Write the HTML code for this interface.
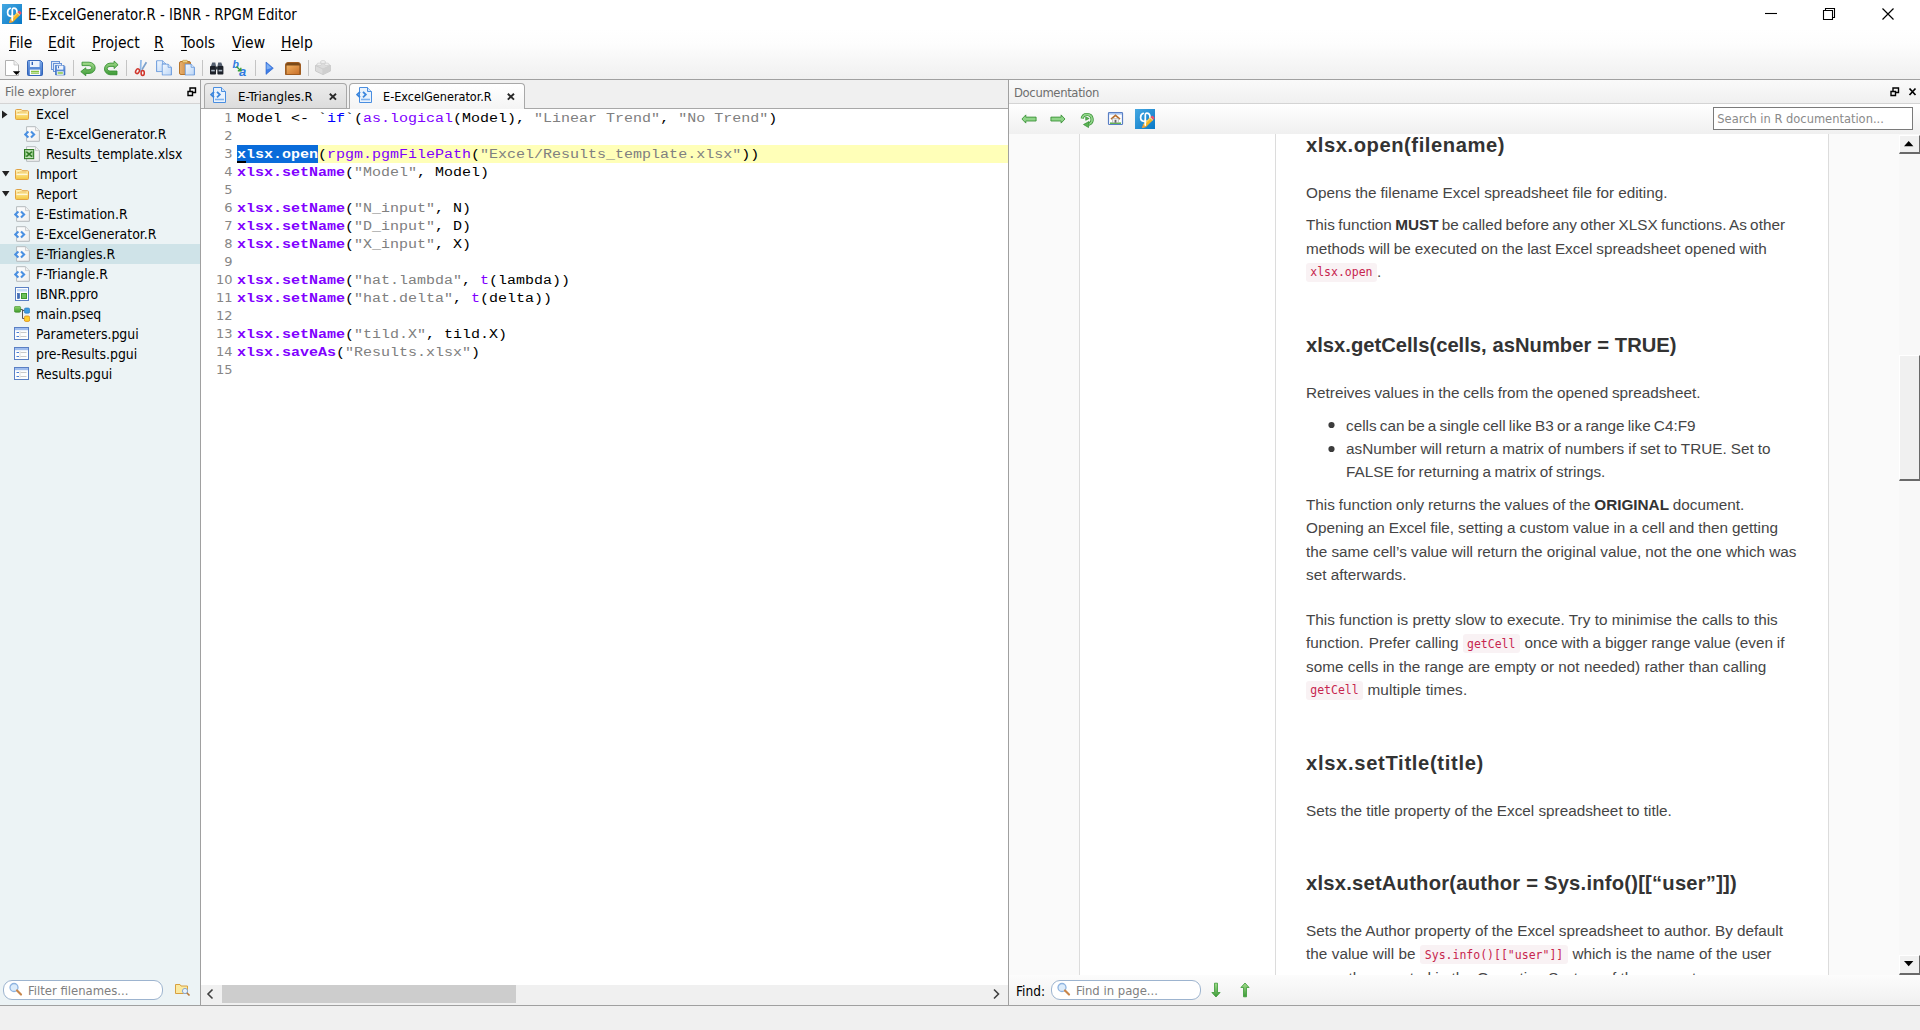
<!DOCTYPE html>
<html><head><meta charset="utf-8"><title>E-ExcelGenerator.R - IBNR - RPGM Editor</title>
<style>
*{box-sizing:border-box;margin:0;padding:0}
html,body{width:1920px;height:1030px;overflow:hidden;background:#f0f0f0;font-family:"DejaVu Sans Condensed","Liberation Sans",sans-serif;color:#000}
.abs{position:absolute}
#titlebar{left:0;top:0;width:1920px;height:29px;background:#fff}
#title{left:27.6px;top:5px;transform:scaleX(0.9);transform-origin:0 0;font:16.4px/20px "DejaVu Sans Condensed","Liberation Sans",sans-serif;white-space:nowrap}
#chrome{left:0;top:29px;width:1920px;height:50px;background:linear-gradient(#fff,#fdfdfd 30%,#f0f0f0)}
#menubar span{position:absolute;top:33px;font:15.5px/20px "DejaVu Sans Condensed","Liberation Sans",sans-serif;white-space:nowrap}
#menubar u{text-decoration-thickness:1px;text-underline-offset:2px}
#topline{left:0;top:79px;width:1920px;height:1px;background:#a0a0a0}
/* left panel */
#left{left:0;top:80px;width:200px;height:925px;background:#ecf3f5}
#lefthead{left:0;top:0;width:200px;height:24px;background:linear-gradient(#fafafa,#f0f0f0);border-bottom:1px solid #d4d4d4}
#lefthead span{position:absolute;left:5px;top:3px;font:12.9px/18px "DejaVu Sans Condensed","Liberation Sans",sans-serif;color:#6e6e6e}
.row{position:absolute;left:0;width:200px;height:20px;font:13.9px/20px "DejaVu Sans Condensed","Liberation Sans",sans-serif;white-space:nowrap}
.row span{position:absolute;top:0}
.sel{background:#cfe3e8}
#vsep1{left:200px;top:80px;width:1px;height:925px;background:#a0a0a0}
/* editor */
#editor{left:201px;top:80px;width:807px;height:925px;background:#f0f0f0}
#code{left:0;top:29px;width:807px;height:876px;background:#fff}
.ln{position:absolute;left:0;width:807px;height:18px;white-space:pre}
.ln i{position:absolute;left:0;top:0;width:31.5px;text-align:right;font-style:normal;color:#868686;font:13px/18px "DejaVu Sans","Liberation Sans",sans-serif;letter-spacing:0}
.ln b{position:absolute;left:36px;top:1px;font:normal 12.5px/18px "Liberation Mono",monospace;transform:scaleX(1.2);transform-origin:0 0}
.f{color:#8000ff;font-weight:bold}.g{color:#8000ff}.s{color:#808080}.k{color:#0000ff}
#vsep2{left:1008px;top:80px;width:1px;height:925px;background:#a0a0a0}
/* doc */
#doc{left:1009px;top:80px;width:911px;height:925px;background:#f0f0f0}
#bottomline{left:0;top:1005px;width:1920px;height:1px;background:#a0a0a0}
.tab{top:3px;border:1px solid #a8a8a8;border-radius:4px 4px 0 0;font:12.55px/20px "DejaVu Sans Condensed","Liberation Sans",sans-serif;white-space:nowrap}
.tab span{position:absolute;top:3px}
.tab em{position:absolute;top:4px;font:normal 9px/18px "DejaVu Sans",sans-serif;color:#333}
.cur::before{content:"";position:absolute;left:36px;top:0;width:771px;height:18px;background:#ffffb8}
.selx{color:#fff;font-weight:bold}
.selbg{position:absolute;left:36px;top:0;width:81px;height:18px;background:#0a6cda}
.caret{position:absolute;left:36px;top:16px;width:9px;height:2px;background:#000}
#dochead{left:0;top:0;width:911px;height:24px;background:linear-gradient(#fafafa,#f0f0f0);border-bottom:1px solid #d4d4d4}
#dochead span{position:absolute;left:5px;top:3.6px;font:12.9px/18px "DejaVu Sans Condensed","Liberation Sans",sans-serif;color:#6e6e6e;letter-spacing:-0.34px}
#doctool{left:0;top:24px;width:911px;height:30px;background:linear-gradient(#ffffff,#f0f0f0)}
#docview{left:0;top:54px;width:911px;height:841px;overflow:hidden;background:#fafafa}
.dp,.dh{position:absolute;white-space:nowrap;font-family:"Liberation Sans",sans-serif;color:#454545}
.dp{font-size:15.3px;line-height:23px}
.dh{font-size:20.2px;line-height:30px;font-weight:bold;color:#333}
.dp strong{color:#333}
.dc{position:absolute;height:18.5px;background:#f9f2f4;border-radius:3px;text-align:center;white-space:nowrap}
.dc code{display:block;font:11.5px/18.5px "DejaVu Sans Mono","Liberation Mono",monospace;color:#c7254e;position:relative;top:0.3px}
.ui{font-family:"DejaVu Sans Condensed","Liberation Sans",sans-serif;white-space:nowrap}
.sbb{background:#f0f0f0;border-top:1px solid #fff;border-left:1px solid #fff;border-right:1px solid #696969;border-bottom:2px solid #696969}
</style></head><body>
<svg width="0" height="0" style="position:absolute"><defs>
<linearGradient id="gFold" x1="0" y1="0" x2="0" y2="1"><stop offset="0" stop-color="#fff6c8"/><stop offset="1" stop-color="#f5c73c"/></linearGradient>
<linearGradient id="gPage" x1="0" y1="0" x2="1" y2="1"><stop offset="0" stop-color="#ffffff"/><stop offset="1" stop-color="#eeeeee"/></linearGradient>
<linearGradient id="gBlue" x1="0" y1="0" x2="0" y2="1"><stop offset="0" stop-color="#7fb2ee"/><stop offset="1" stop-color="#2f6fc9"/></linearGradient>
<linearGradient id="gGreen" x1="0" y1="0" x2="0" y2="1"><stop offset="0" stop-color="#8fd46a"/><stop offset="1" stop-color="#3f9a2c"/></linearGradient>
<symbol id="folder" viewBox="0 0 14 11"><path d="M0.500 1.500 Q0.500 0.500 1.500 0.500 H6.300 L7.300 1.700 H12.500 Q13.500 1.700 13.500 2.700 V9.500 Q13.500 10.500 12.500 10.500 H1.500 Q0.500 10.500 0.500 9.500 Z" fill="url(#gFold)" stroke="#e0a244" stroke-width="1"/><path d="M2.500 3.600 H4 L4.600 3 H11.500" fill="none" stroke="#ecc060" stroke-width="1"/><path d="M1.500 5.400 H12.500" stroke="#ffffff" stroke-opacity="0.800" stroke-width="1"/></symbol>
<symbol id="rfile" viewBox="0 0 16 16"><path d="M2.600 0.700 H11.500 L15.400 4.600 V15.300 H2.600 Z" fill="url(#gPage)" stroke="#b4babd"/><path d="M11.500 0.700 V4.600 H15.400" fill="#f0f0f0" stroke="#c0c4c6" stroke-width="0.800"/><path d="M4.400 5.400 L1.300 8.500 L4.400 11.600 M7 5.400 L10.100 8.500 L7 11.600" fill="none" stroke="#4a90e2" stroke-width="2.100"/></symbol>
<symbol id="xfile" viewBox="0 0 16 16"><path d="M2.600 0.700 H11.500 L15.400 4.600 V15.300 H2.600 Z" fill="url(#gPage)" stroke="#b4babd"/><path d="M11.500 0.700 V4.600 H15.400" fill="#f0f0f0" stroke="#c0c4c6" stroke-width="0.800"/><rect x="0.500" y="3.500" width="9.200" height="9.200" fill="#58a848" stroke="#2f7a23"/><rect x="1.600" y="5" width="7" height="6.200" fill="#b4dca8"/><path d="M2.300 5.600 L8 10.600 M8 5.600 L2.300 10.600" stroke="#2f7a23" stroke-width="1.500"/><path d="M1 4.700 H9.200 M1 11.500 H9.200" stroke="#e8f4e4" stroke-width="0.700"/></symbol>
<symbol id="ppro" viewBox="0 0 14 14"><rect x="0.5" y="0.5" width="13" height="13" fill="#fbfdff" stroke="#5a7fc4"/><rect x="2" y="2" width="10" height="2.5" fill="#c5daf5"/><rect x="2.5" y="6.5" width="2" height="5" fill="#3d6fbd" stroke="#2d57a0" stroke-width="0.6"/><rect x="6.5" y="6.5" width="5" height="5" fill="#6cc05a" stroke="#3f9a2c"/></symbol>
<symbol id="pgui" viewBox="0 0 15 13"><rect x="0.5" y="0.5" width="14" height="12" fill="#fdfdfd" stroke="#5a7fc4"/><rect x="1" y="1" width="13" height="2.200" fill="#9fbdee"/><path d="M2.5 5.5 H5 M2.5 9.5 H5" stroke="#4a7fd4" stroke-width="1.2"/><path d="M6.5 5.5 H12.5 M6.5 9.5 H12.5" stroke="#c8c8c8" stroke-width="1.2"/><path d="M6 4 V11" stroke="#d8d8d8" stroke-width="0.8"/></symbol>
<symbol id="pseq" viewBox="0 0 16 16"><path d="M6 3.5 H8.5 V12.5 H10.5 M8.5 4.5 H10.5" fill="none" stroke="#555" stroke-width="1"/><rect x="0.3" y="0.3" width="6.4" height="6" rx="1.6" fill="url(#gGreen)" stroke="#3a8a28" stroke-width="0.6"/><rect x="10.3" y="2" width="5.4" height="5.2" rx="1.5" fill="#3c9be0" stroke="#1f6fb8" stroke-width="0.6"/><rect x="10.3" y="10" width="5.4" height="5.4" rx="1.5" fill="#ffd02a" stroke="#d98a1a" stroke-width="0.8"/></symbol>
<symbol id="tabicon" viewBox="0 0 17 16"><path d="M3.5 0.5 H11.5 L15.5 4.5 V15.5 H3.5 Z" fill="#eaf3fd" stroke="#4a8ee0"/><path d="M11.5 0.5 V4.5 H15.5" fill="#cfe3fa" stroke="#4a8ee0"/><path d="M4 4.8 L1.2 7.6 L4 10.4 M7 4.8 L9.8 7.6 L7 10.4" fill="none" stroke="#3b86dd" stroke-width="1.8"/><path d="M5 12.5 H14" stroke="#7fb2ee" stroke-width="1.6"/></symbol>
</defs></svg>
<div id="titlebar" class="abs"></div>
<div id="title" class="abs">E-ExcelGenerator.R - IBNR - RPGM Editor</div>
<div id="chrome" class="abs"></div>
<div id="menubar"><span style="left:9px"><u>F</u>ile</span><span style="left:48px"><u>E</u>dit</span><span style="left:92px"><u>P</u>roject</span><span style="left:154px"><u>R</u></span><span style="left:181px"><u>T</u>ools</span><span style="left:232px"><u>V</u>iew</span><span style="left:281px"><u>H</u>elp</span></div>
<div id="topline" class="abs"></div>
<div id="left" class="abs">
<div id="lefthead" class="abs"><span>File explorer</span></div>
<div class="row" style="top:24px"><svg class="abs" style="left:2px;top:6px" width="6" height="9"><path d="M0 0.5 L5.5 4.5 L0 8.5 Z" fill="#222"/></svg><svg class="abs" style="left:15px;top:5px" width="14" height="11"><use href="#folder"/></svg><span style="left:36px">Excel</span></div>
<div class="row" style="top:44px"><svg class="abs" style="left:24px;top:2px" width="16" height="16"><use href="#rfile"/></svg><span style="left:46px">E-ExcelGenerator.R</span></div>
<div class="row" style="top:64px"><svg class="abs" style="left:24px;top:2px" width="16" height="16"><use href="#xfile"/></svg><span style="left:46px">Results_template.xlsx</span></div>
<div class="row" style="top:84px"><svg class="abs" style="left:2px;top:7px" width="8" height="6"><path d="M0 0 H7.5 L3.75 5.5 Z" fill="#222"/></svg><svg class="abs" style="left:15px;top:5px" width="14" height="11"><use href="#folder"/></svg><span style="left:36px">Import</span></div>
<div class="row" style="top:104px"><svg class="abs" style="left:2px;top:7px" width="8" height="6"><path d="M0 0 H7.5 L3.75 5.5 Z" fill="#222"/></svg><svg class="abs" style="left:15px;top:5px" width="14" height="11"><use href="#folder"/></svg><span style="left:36px">Report</span></div>
<div class="row" style="top:124px"><svg class="abs" style="left:14px;top:2px" width="16" height="16"><use href="#rfile"/></svg><span style="left:36px">E-Estimation.R</span></div>
<div class="row" style="top:144px"><svg class="abs" style="left:14px;top:2px" width="16" height="16"><use href="#rfile"/></svg><span style="left:36px">E-ExcelGenerator.R</span></div>
<div class="row sel" style="top:164px"><svg class="abs" style="left:14px;top:2px" width="16" height="16"><use href="#rfile"/></svg><span style="left:36px">E-Triangles.R</span></div>
<div class="row" style="top:184px"><svg class="abs" style="left:14px;top:2px" width="16" height="16"><use href="#rfile"/></svg><span style="left:36px">F-Triangle.R</span></div>
<div class="row" style="top:204px"><svg class="abs" style="left:15px;top:3px" width="14" height="14"><use href="#ppro"/></svg><span style="left:36px">IBNR.ppro</span></div>
<div class="row" style="top:224px"><svg class="abs" style="left:14px;top:2px" width="16" height="16"><use href="#pseq"/></svg><span style="left:36px">main.pseq</span></div>
<div class="row" style="top:244px"><svg class="abs" style="left:14px;top:3px" width="15" height="13"><use href="#pgui"/></svg><span style="left:36px">Parameters.pgui</span></div>
<div class="row" style="top:264px"><svg class="abs" style="left:14px;top:3px" width="15" height="13"><use href="#pgui"/></svg><span style="left:36px">pre-Results.pgui</span></div>
<div class="row" style="top:284px"><svg class="abs" style="left:14px;top:3px" width="15" height="13"><use href="#pgui"/></svg><span style="left:36px">Results.pgui</span></div>
</div>
<div id="vsep1" class="abs"></div>
<div id="editor" class="abs">
<div class="abs" style="left:0;top:28px;width:807px;height:1px;background:#a8a8a8"></div>
<div class="abs tab" style="left:3px;width:143px;background:linear-gradient(#ececec,#dcdcdc);height:25px;border-bottom:none"><svg class="abs" style="left:5px;top:3px" width="17" height="16"><use href="#tabicon"/></svg><span style="left:33px;font-size:13.1px">E-Triangles.R</span><svg class="abs" style="left:124px;top:9px" width="8" height="8"><path d="M0.800 0.800 L7 6.600 M7 0.800 L0.800 6.600" stroke="#2a2a2a" stroke-width="1.900"/></svg></div>
<div class="abs tab" style="left:148px;width:176px;background:linear-gradient(#ffffff,#f4f4f4);height:26px;border-bottom:none"><svg class="abs" style="left:6px;top:3px" width="17" height="16"><use href="#tabicon"/></svg><span style="left:33px">E-ExcelGenerator.R</span><svg class="abs" style="left:157px;top:9px" width="8" height="8"><path d="M0.800 0.800 L7 6.600 M7 0.800 L0.800 6.600" stroke="#2a2a2a" stroke-width="1.900"/></svg></div>
<div id="code" class="abs">
<div class="ln" style="top:0px"><i>1</i><b>Model &lt;- `<span class="k">if</span>`(<span class="g">as.logical</span>(Model), <span class="s">"Linear Trend"</span>, <span class="s">"No Trend"</span>)</b></div>
<div class="ln" style="top:18px"><i>2</i><b></b></div>
<div class="ln cur" style="top:36px"><div class="selbg"></div><i>3</i><b><span class="selx">xlsx.open</span>(<span class="g">rpgm.pgmFilePath</span>(<span class="s">"Excel/Results_template.xlsx"</span>))</b><div class="caret"></div></div>
<div class="ln" style="top:54px"><i>4</i><b><span class="f">xlsx.setName</span>(<span class="s">"Model"</span>, Model)</b></div>
<div class="ln" style="top:72px"><i>5</i><b></b></div>
<div class="ln" style="top:90px"><i>6</i><b><span class="f">xlsx.setName</span>(<span class="s">"N_input"</span>, N)</b></div>
<div class="ln" style="top:108px"><i>7</i><b><span class="f">xlsx.setName</span>(<span class="s">"D_input"</span>, D)</b></div>
<div class="ln" style="top:126px"><i>8</i><b><span class="f">xlsx.setName</span>(<span class="s">"X_input"</span>, X)</b></div>
<div class="ln" style="top:144px"><i>9</i><b></b></div>
<div class="ln" style="top:162px"><i>10</i><b><span class="f">xlsx.setName</span>(<span class="s">"hat.lambda"</span>, <span class="g">t</span>(lambda))</b></div>
<div class="ln" style="top:180px"><i>11</i><b><span class="f">xlsx.setName</span>(<span class="s">"hat.delta"</span>, <span class="g">t</span>(delta))</b></div>
<div class="ln" style="top:198px"><i>12</i><b></b></div>
<div class="ln" style="top:216px"><i>13</i><b><span class="f">xlsx.setName</span>(<span class="s">"tild.X"</span>, tild.X)</b></div>
<div class="ln" style="top:234px"><i>14</i><b><span class="f">xlsx.saveAs</span>(<span class="s">"Results.xlsx"</span>)</b></div>
<div class="ln" style="top:252px"><i>15</i><b></b></div>
</div>
</div>
<div id="vsep2" class="abs"></div>
<div id="doc" class="abs">
<div id="dochead" class="abs"><span>Documentation</span></div>
<div id="doctool" class="abs"></div>
<div id="docview" class="abs">
<div class="abs" style="left:0;top:0;width:890px;height:841px;background:#fafafa"></div>
<div class="abs" style="left:70px;top:0;width:750px;height:841px;background:#fff;border-left:1px solid #dcdcdc;border-right:1px solid #dcdcdc"></div>
<div class="abs" style="left:266px;top:0;width:1px;height:841px;background:#dcdcdc"></div>
<div class="dh" style="left:297.00px;top:-4px;letter-spacing:0.553px">xlsx.open(filename)</div>
<div class="dp" style="left:297.00px;top:46.50px;word-spacing:-0.105px">Opens the filename Excel spreadsheet file for editing.</div>
<div class="dp" style="left:297.00px;top:79.40px;word-spacing:-0.903px">This function <strong>MUST</strong> be called before any other XLSX functions. As other</div>
<div class="dp" style="left:297.00px;top:102.70px;word-spacing:-0.275px">methods will be executed on the last Excel spreadsheet opened with</div>
<div class="dc" style="left:296.70px;top:129.00px;width:71.40px"><code>xlsx.open</code></div>
<div class="dp" style="left:367.90px;top:125.80px">.</div>
<div class="dh" style="left:297.00px;top:196px;word-spacing:0.271px">xlsx.getCells(cells, asNumber = TRUE)</div>
<div class="dp" style="left:297.00px;top:246.80px;word-spacing:-0.444px">Retreives values in the cells from the opened spreadsheet.</div>
<div class="dp" style="left:337.00px;top:279.60px;word-spacing:-1.060px">cells can be a single cell like B3 or a range like C4:F9</div>
<div class="dp" style="left:337.00px;top:302.85px;word-spacing:-0.236px">asNumber will return a matrix of numbers if set to TRUE. Set to</div>
<div class="dp" style="left:337.00px;top:326.10px;word-spacing:-0.710px">FALSE for returning a matrix of strings.</div>
<div class="dp" style="left:297.00px;top:359.10px;word-spacing:-0.427px">This function only returns the values of the <strong>ORIGINAL</strong> document.</div>
<div class="dp" style="left:297.00px;top:382.35px;word-spacing:-0.258px">Opening an Excel file, setting a custom value in a cell and then getting</div>
<div class="dp" style="left:297.00px;top:405.60px;word-spacing:-0.053px">the same cell’s value will return the original value, not the one which was</div>
<div class="dp" style="left:297.00px;top:428.85px;word-spacing:0.172px">set afterwards.</div>
<div class="dp" style="left:297.00px;top:474.00px;word-spacing:0.055px">This function is pretty slow to execute. Try to minimise the calls to this</div>
<div class="dp" style="left:297.00px;top:497.20px;word-spacing:0.620px">function. Prefer calling</div>
<div class="dc" style="left:453.60px;top:500.40px;width:57.30px"><code>getCell</code></div>
<div class="dp" style="left:515.50px;top:497.20px;word-spacing:-0.409px">once with a bigger range value (even if</div>
<div class="dp" style="left:297.00px;top:520.60px;word-spacing:0.086px">some cells in the range are empty or not needed) rather than calling</div>
<div class="dc" style="left:296.90px;top:547.10px;width:57.10px"><code>getCell</code></div>
<div class="dp" style="left:358.40px;top:543.90px;letter-spacing:0.143px">multiple times.</div>
<div class="dh" style="left:297.00px;top:614px;letter-spacing:0.673px">xlsx.setTitle(title)</div>
<div class="dp" style="left:297.00px;top:664.90px;word-spacing:-0.076px">Sets the title property of the Excel spreadsheet to title.</div>
<div class="dh" style="left:297.00px;top:734px;letter-spacing:0.218px">xlsx.setAuthor(author = Sys.info()[[“user”]])</div>
<div class="dp" style="left:297.00px;top:784.90px;word-spacing:-0.082px">Sets the Author property of the Excel spreadsheet to author. By default</div>
<div class="dp" style="left:297.00px;top:808.10px;word-spacing:0.252px">the value will be</div>
<div class="dc" style="left:411.20px;top:811.30px;width:147.70px"><code>Sys.info()[["user"]]</code></div>
<div class="dp" style="left:563.40px;top:808.10px;word-spacing:0.007px">which is the name of the user</div>
<div class="dp" style="left:297.00px;top:832.40px">name the reported in the Operating System of the computer.</div>
<svg class="abs" style="left:318px;top:286.30px" width="10" height="10"><circle cx="4.500" cy="5" r="3.100" fill="#3c3c3c"/></svg>
<svg class="abs" style="left:318px;top:309.55px" width="10" height="10"><circle cx="4.500" cy="5" r="3.100" fill="#3c3c3c"/></svg>
</div>
</div>
<div id="bottomline" class="abs"></div>
<svg width="0" height="0" style="position:absolute"><defs>
<linearGradient id="gApp" x1="0" y1="0" x2="1" y2="1"><stop offset="0" stop-color="#45a8e2"/><stop offset="1" stop-color="#0878c6"/></linearGradient>
<linearGradient id="gGrn" x1="0" y1="0" x2="0" y2="1"><stop offset="0" stop-color="#a4dc8c"/><stop offset="1" stop-color="#3c9a36"/></linearGradient>
<linearGradient id="gFlop" x1="0" y1="0" x2="0" y2="1"><stop offset="0" stop-color="#7aa7e6"/><stop offset="1" stop-color="#3a6fc8"/></linearGradient>
<linearGradient id="gPg" x1="0" y1="0" x2="1" y2="1"><stop offset="0" stop-color="#f4f9ff"/><stop offset="1" stop-color="#bcd6f6"/></linearGradient>
<linearGradient id="gBox" x1="0" y1="0" x2="1" y2="1"><stop offset="0" stop-color="#f0b060"/><stop offset="1" stop-color="#c9702a"/></linearGradient>
<linearGradient id="gClip" x1="0" y1="0" x2="1" y2="0"><stop offset="0" stop-color="#e8b070"/><stop offset="1" stop-color="#c88030"/></linearGradient>
<symbol id="appicon" viewBox="0 0 20 20"><rect width="20" height="20" fill="url(#gApp)"/>
<path d="M8.300 4.300 Q5.600 5.200 5.600 8.600 Q5.600 12.600 10.300 12.600 Q15 12.600 15 8.200 Q15 4.200 11.600 4.200 Q10.300 4.200 10.300 6 V16.400" fill="none" stroke="#fff" stroke-width="1.700" stroke-linecap="round"/>
<path d="M7 19 L8.300 15.200 L15.600 8 L18.300 10.700 L11 17.900 Z" fill="#f2b424"/><path d="M8.300 15.200 L15.600 8 L16.500 8.900 L9.200 16.100 Z" fill="#f8d060"/><path d="M7 19 L8.300 15.200 L11 17.900 Z" fill="#f0a040"/><path d="M15.600 8 L16.600 7 Q17.300 6.400 18 7.100 L19.200 8.300 Q19.800 9 19.300 9.700 L18.300 10.700 Z" fill="#f0506a"/><path d="M15.100 8.500 L17.800 11.200" stroke="#f0e8e0" stroke-width="0.900"/>
<path d="M10.300 11 V16.200" stroke="#fff" stroke-width="1.600" stroke-linecap="round"/></symbol>
<symbol id="floppy" viewBox="0 0 16 16"><path d="M0.5 1.5 Q0.5 0.5 1.5 0.5 H13.5 L15.5 2.5 V14.5 Q15.5 15.5 14.5 15.5 H1.5 Q0.5 15.5 0.5 14.5 Z" fill="url(#gFlop)" stroke="#3465b8"/><rect x="3" y="1" width="9.5" height="6" fill="#eef4fd"/><rect x="4.6" y="1.8" width="1.4" height="3.2" fill="#3465b8"/><rect x="2.8" y="9.6" width="10.4" height="5.4" fill="#f8fbff"/><path d="M4 11.3 H12 M4 13.2 H12" stroke="#86c440" stroke-width="1.3"/></symbol>
<symbol id="page" viewBox="0 0 11 13"><path d="M0.5 0.5 H7 L10.5 4 V12.5 H0.5 Z" fill="url(#gPg)" stroke="#5a8fd8"/><path d="M7 0.5 V4 H10.5" fill="#e0ecfb" stroke="#5a8fd8" stroke-width="0.8"/></symbol>
</defs></svg>
<!-- title icon -->
<svg class="abs" style="left:2px;top:4px" width="20" height="20"><use href="#appicon"/></svg>
<!-- window controls -->
<svg class="abs" style="left:1760px;top:0" width="160" height="29"><path d="M5 13.5 H17" stroke="#000" stroke-width="1.1"/><path d="M63.5 10.5 H72.5 V19.5 H63.5 Z M65.5 10.5 V8.5 H74.5 V17.5 H72.5" fill="none" stroke="#000" stroke-width="1.1"/><path d="M122.5 8.5 L133.5 19.5 M133.5 8.5 L122.5 19.5" stroke="#000" stroke-width="1.2"/></svg>
<!-- main toolbar -->
<svg class="abs" style="left:0;top:57px" width="340" height="22" id="maintb">
<!-- new -->
<path d="M5.5 3.5 H14 L18.5 8 V18.5 H5.5 Z" fill="#fff" stroke="#b0b0b0"/><path d="M14 3.5 V8 H18.5" fill="#f0f0f0" stroke="#c0c0c0" stroke-width="0.8"/><path d="M12.8 14.2 H20.2 L16.5 18 Z" fill="#000"/>
<use href="#floppy" x="27" y="3" width="16" height="16"/>
<!-- save all -->
<g><rect x="51.500" y="4.500" width="8" height="8" fill="#dfeafa" stroke="#6a94d8"/><rect x="53.500" y="6.500" width="8" height="8" fill="#dfeafa" stroke="#6a94d8"/><use href="#floppy" x="55" y="8" width="10.500" height="10.500"/></g>
<path d="M73.500 3 V19 M126.500 3 V19 M202.500 3 V19 M255.500 3 V19 M308.500 3 V19" stroke="#c4c4c4"/>
<!-- undo -->
<path d="M82 5.2 H89 A6.2 5.65 0 0 1 89 16.5 H85.8 V18.8 L80.8 14.6 L85.8 10.8 V12.75 H89 A2.9 2.08 0 0 0 89 8.6 H82 Z" fill="url(#gGrn)" stroke="#2f8a2c" stroke-width="0.8"/>
<!-- redo -->
<path d="M114.1 6.1 V4 L118.1 7.75 L114.1 11.6 V9.4 H110 A2.8 2.3 0 0 0 110 14 H117 V17.75 H110 A6.1 5.85 0 0 1 110 6.1 Z" fill="url(#gGrn)" stroke="#2f8a2c" stroke-width="0.8"/>
<!-- scissors -->
<path d="M141 3 L140.4 14.8" stroke="#8eb8e8" stroke-width="1.7"/><path d="M146.4 5.25 L142 12.6" stroke="#7aa0cc" stroke-width="1.7"/><ellipse cx="137.5" cy="14.2" rx="1.7" ry="2.5" fill="none" stroke="#d0352b" stroke-width="1.5" transform="rotate(30 137.5 14.2)"/><ellipse cx="142.7" cy="16.1" rx="1.6" ry="2.5" fill="none" stroke="#d0352b" stroke-width="1.5"/>
<!-- copy -->
<use href="#page" x="156" y="3.200" width="10.500" height="12"/><use href="#page" x="161.500" y="6.600" width="10.500" height="12"/>
<!-- paste -->
<rect x="179.500" y="4.500" width="11" height="13" rx="1.500" fill="url(#gClip)" stroke="#b87428"/><rect x="182.500" y="3.300" width="5" height="2.400" rx="0.800" fill="#f0d080" stroke="#b88a30" stroke-width="0.600"/><use href="#page" x="184.500" y="6.600" width="10.500" height="12"/>
<!-- binoculars -->
<path d="M211 9 L212.200 5.500 H215.300 L216 9 Z M217.500 9 L218.200 5.500 H221.300 L222.600 9 Z" fill="#556070"/><rect x="210" y="9" width="6" height="8.600" rx="0.800" fill="#1c2028"/><rect x="217.400" y="9" width="6" height="8.600" rx="0.800" fill="#1c2028"/><rect x="215.500" y="9.500" width="2.500" height="3" fill="#303840"/><rect x="211.200" y="12.800" width="3.600" height="1.600" fill="#a8b4c0"/><rect x="218.600" y="12.800" width="3.600" height="1.600" fill="#a8b4c0"/>
<!-- replace b->a -->
<text x="232.500" y="11" font-family="Liberation Sans,sans-serif" font-style="italic" font-weight="bold" font-size="10.500" fill="#2f7be0">b</text><text x="239" y="18.600" font-family="Liberation Sans,sans-serif" font-style="italic" font-weight="bold" font-size="13" fill="#2f7be0">a</text><path d="M236.500 9.500 L240.500 13.500 M240.800 10.800 V13.800 H237.800" stroke="#3aa03a" stroke-width="1.400" fill="none"/>
<!-- play -->
<path d="M266 5 L273.300 11.200 L266 17.400 Z" fill="#3f7fe8" stroke="#2a60c8" stroke-width="0.600"/><path d="M266.600 6.500 L271.600 11 L266.600 12.500 Z" fill="#7fb0f4"/>
<!-- box -->
<path d="M285.500 8 Q285.500 5.500 288 5.500 H298 Q300.500 5.500 300.500 8 V17.500 H285.500 Z" fill="#7a4a1a" stroke="#a05c20"/><rect x="286.500" y="8.500" width="13" height="8.500" fill="url(#gBox)"/>
<!-- lego -->
<path d="M315.500 8.500 L323 5 L330.500 8.500 V14 L323 17.600 L315.500 14 Z" fill="#dcdcdc" stroke="#c4c4c4" stroke-width="0.800"/><path d="M315.500 8.500 L323 12 L330.500 8.500 M323 12 V17.600" fill="none" stroke="#c8c8c8" stroke-width="0.800"/><ellipse cx="323" cy="5" rx="2.600" ry="1.500" fill="#eeeeee" stroke="#c8c8c8" stroke-width="0.600"/><ellipse cx="319.200" cy="7.300" rx="2.300" ry="1.300" fill="#eeeeee" stroke="#c8c8c8" stroke-width="0.600"/><ellipse cx="326.800" cy="7.300" rx="2.300" ry="1.300" fill="#eeeeee" stroke="#c8c8c8" stroke-width="0.600"/><path d="M323 12 L330.500 8.500 V14 L323 17.600 Z" fill="#cfcfcf"/>
</svg>
<!-- float buttons in headers -->
<svg class="abs" style="left:187px;top:87px" width="10" height="10"><path d="M3 1 H8.500 V5.500 H3 Z" fill="none" stroke="#000" stroke-width="1.400"/><path d="M1 4.500 H5.500 V8.500 H1 Z" fill="#f4f4f4" stroke="#000" stroke-width="1.400"/></svg>
<svg class="abs" style="left:1889.500px;top:87px" width="30" height="10"><path d="M3 1 H8.500 V5.500 H3 Z" fill="none" stroke="#000" stroke-width="1.400"/><path d="M1 4.500 H5.500 V8.500 H1 Z" fill="#f4f4f4" stroke="#000" stroke-width="1.400"/><path d="M19.500 1.500 L25.500 8 M25.500 1.500 L19.500 8" stroke="#000" stroke-width="1.700"/></svg>
<!-- doc toolbar icons -->
<svg class="abs" style="left:1009px;top:104px" width="160" height="30">
<path d="M12.9 15 L16.8 10.9 V13.1 H27.1 V17 H16.8 V19.1 Z" fill="#8fd488" stroke="#2f8a2c" stroke-width="0.8"/>
<path d="M56 15 L52.1 10.900 V13.1 H41.9 V17 H52.1 V19.1 Z" fill="#8fd488" stroke="#2f8a2c" stroke-width="0.8"/>
<path d="M73.200 14.500 A5 5 0 1 1 79.500 20.300" fill="none" stroke="#2f8a2c" stroke-width="3.2"/><path d="M73.200 14.500 A5 5 0 1 1 79.500 20.300" fill="none" stroke="#8fd488" stroke-width="1.8"/><path d="M80 17.500 L74.500 20.500 L79.500 23.500 Z" fill="#5ab454" stroke="#2f8a2c" stroke-width="0.7"/><path d="M76.700 12.800 L80.200 14.500 L76.700 16.300 Z" fill="#5ab454" stroke="#2f8a2c" stroke-width="0.6"/>
<rect x="99.500" y="8.500" width="14" height="12" rx="0.800" fill="#ffffff" stroke="#5a7fc4" stroke-width="1.2"/><rect x="100" y="9" width="13" height="1.600" fill="#a8c4f0"/><path d="M101 19.200 H112" stroke="#5ab04a" stroke-width="1.500"/><path d="M102 15.200 L106.500 11.300 L111 15.200" fill="none" stroke="#b87030" stroke-width="1.700"/><rect x="103.700" y="14.600" width="5.600" height="4" fill="#f0f0f0" stroke="#999" stroke-width="0.500"/><rect x="105.600" y="15.800" width="1.800" height="2.900" fill="#666"/>
<use href="#appicon" x="126" y="5" width="20" height="20"/>
</svg>
<!-- search box -->
<div class="abs" style="left:1713px;top:107px;width:200px;height:23px;background:#fff;border:1px solid #7a7a7a"></div>
<div class="abs ui" style="left:1717.3px;top:110.3px;font-size:12.75px;line-height:18px;color:#8a8a8a">Search in R documentation...</div>
<!-- doc v scrollbar -->
<div class="abs" style="left:1899px;top:134px;width:21px;height:841px;background:#f8f8f8"></div>
<div class="abs sbb" style="left:1899px;top:135px;width:21px;height:19px"><svg class="abs" style="left:4px;top:5px" width="10" height="6"><path d="M0 5.200 L4.700 0 L9.400 5.200 Z" fill="#000"/></svg></div>
<div class="abs sbb" style="left:1899px;top:355px;width:21px;height:126px"></div>
<div class="abs sbb" style="left:1899px;top:955px;width:21px;height:20px"><svg class="abs" style="left:4px;top:5px" width="10" height="6"><path d="M0 0 L4.700 5.200 L9.400 0 Z" fill="#000"/></svg></div>
<!-- find bar -->
<div class="abs" style="left:1009px;top:975px;width:911px;height:30px;background:linear-gradient(#fcfcfc,#f0f0f0)"></div>
<div class="abs ui" style="left:1016px;top:981.5px;font-size:13.55px;line-height:18px;color:#000">Find:</div>
<div class="abs" style="left:1051px;top:980px;width:150px;height:20px;background:#fff;border:1px solid #9db4cf;border-radius:9px"></div>
<svg class="abs" style="left:1056px;top:982px" width="16" height="16"><circle cx="6" cy="5.500" r="4" fill="#dcecfb" stroke="#8fb4e0" stroke-width="1.300"/><path d="M9 8.500 L13 12.500" stroke="#c8864a" stroke-width="2.200" stroke-linecap="round"/></svg>
<div class="abs ui" style="left:1076px;top:981.6px;font-size:12.95px;line-height:18px;color:#808080">Find in page...</div>
<svg class="abs" style="left:1209px;top:982px" width="44" height="16"><path d="M7 15 L2.900 10.500 H5.500 V1.200 H8.500 V10.500 H11.100 Z" fill="url(#gGrn)" stroke="#3a9a36" stroke-width="0.800"/><path d="M36 1 L31.900 5.500 H34.500 V14.800 H37.500 V5.500 H40.100 Z" fill="url(#gGrn)" stroke="#3a9a36" stroke-width="0.800"/></svg>
<!-- filter box -->
<div class="abs" style="left:3px;top:980px;width:160px;height:20px;background:#fff;border:1px solid #9db4cf;border-radius:9px"></div>
<svg class="abs" style="left:8px;top:982px" width="16" height="16"><circle cx="6" cy="5.500" r="4" fill="#dcecfb" stroke="#8fb4e0" stroke-width="1.300"/><path d="M9 8.500 L13 12.500" stroke="#c8864a" stroke-width="2.200" stroke-linecap="round"/></svg>
<div class="abs ui" style="left:28px;top:981.6px;font-size:12.95px;line-height:18px;color:#808080">Filter filenames...</div>
<svg class="abs" style="left:174px;top:982px" width="18" height="16"><path d="M1.500 2.500 H6 L7 4 H13.500 V11.500 H1.500 Z" fill="#fbe9a0" stroke="#d8a040"/><circle cx="11" cy="9" r="2.600" fill="#e8f2fc" stroke="#8aa8d0" stroke-width="1"/><path d="M13 11 L15.500 13.500" stroke="#b87838" stroke-width="1.600"/></svg>
<!-- editor h scrollbar -->
<div class="abs" style="left:201px;top:985px;width:807px;height:18px;background:#f0f0f0"></div>
<div class="abs" style="left:222px;top:985px;width:294px;height:18px;background:#cdcdcd"></div>
<svg class="abs" style="left:206px;top:988px" width="10" height="12"><path d="M6.500 1.500 L2 6 L6.500 10.500" fill="none" stroke="#404040" stroke-width="1.600"/></svg>
<svg class="abs" style="left:991px;top:988px" width="10" height="12"><path d="M3 1.500 L7.500 6 L3 10.500" fill="none" stroke="#404040" stroke-width="1.600"/></svg>

</body></html>
